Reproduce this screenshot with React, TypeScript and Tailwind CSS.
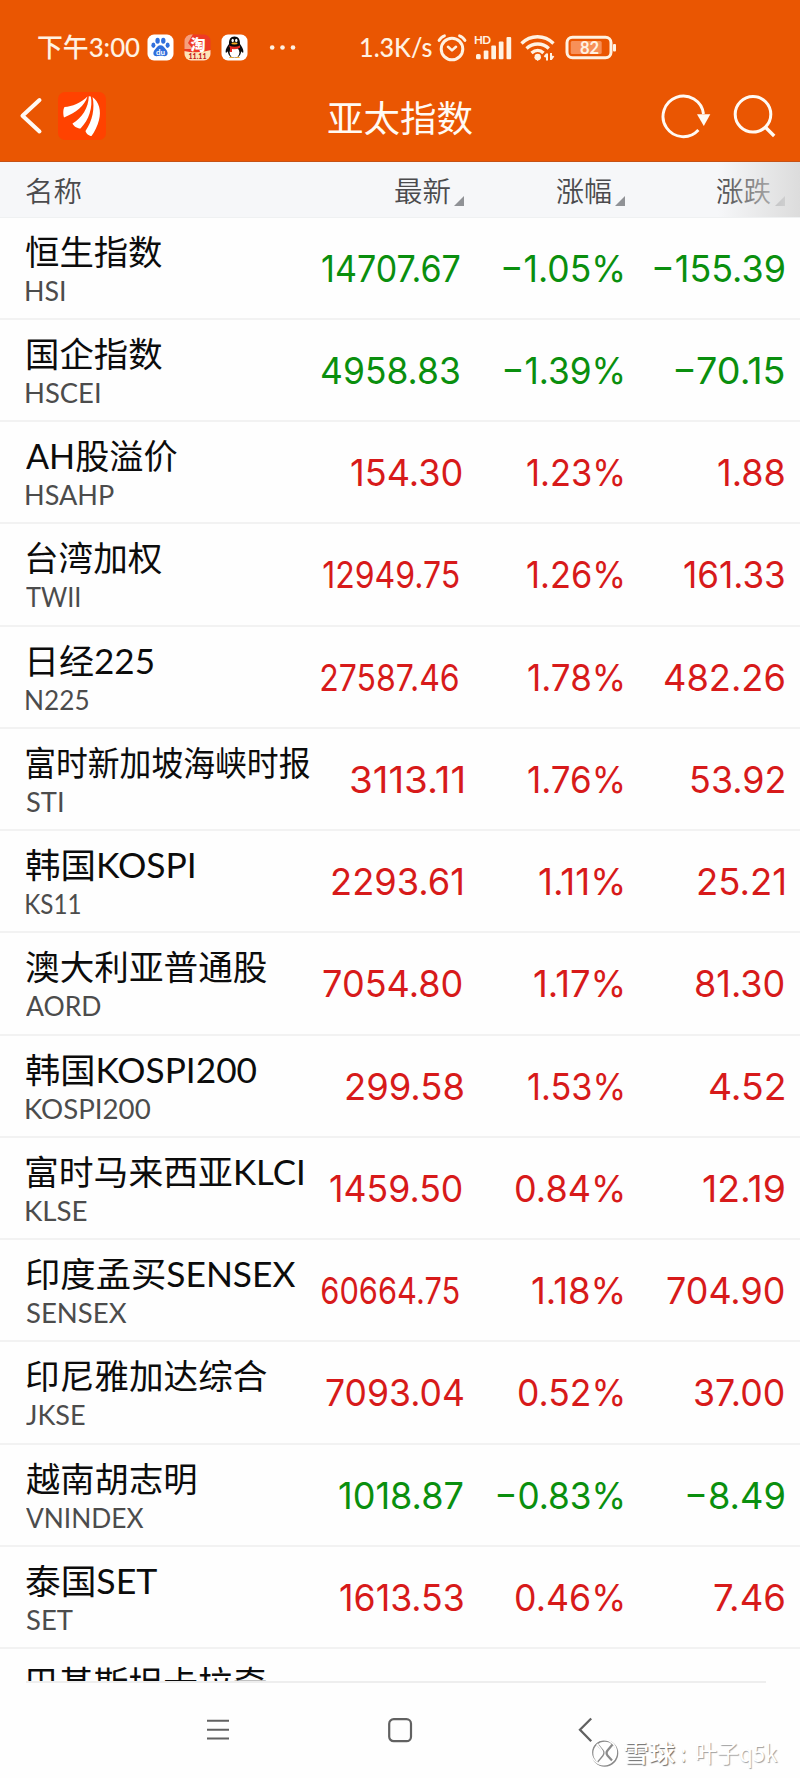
import { useLayoutEffect, useRef, useState } from "react";

/** Text condensed or widened so that its drawn width is exactly `width` pixels. */
function Fit({ text, width, className = "" }: { text: string; width: number; className?: string }) {
  const ref = useRef<HTMLSpanElement>(null);
  const [transform, setTransform] = useState("none");
  useLayoutEffect(() => {
    const el = ref.current;
    const ctx = document.createElement("canvas").getContext("2d");
    if (!el || !ctx) return;
    const cs = getComputedStyle(el);
    ctx.font = `${cs.fontWeight} ${cs.fontSize} ${cs.fontFamily}`;
    const m = ctx.measureText(text);
    const ink = m.actualBoundingBoxLeft + m.actualBoundingBoxRight;
    setTransform(`scaleX(${width / ink}) translateX(${m.actualBoundingBoxLeft}px)`);
  }, [text, width]);
  return (
    <div className={`shrink-0 whitespace-nowrap ${className}`} style={{ width }}>
      <span ref={ref} className="inline-block origin-left" style={{ transform }}>
        {text}
      </span>
    </div>
  );
}

type Cell = [text: string, width: number];
type Quote = { name: Cell; indent?: number; code: Cell; last: Cell; lastRight: number; pct: Cell; chg: Cell };

const quotes: Quote[] = [
  { name: ["恒生指数", 136], code: ["HSI", 39], last: ["14707.67", 138], lastRight: 460, pct: ["−1.05%", 120], chg: ["−155.39", 130] },
  { name: ["国企指数", 135], indent: 1, code: ["HSCEI", 74], last: ["4958.83", 137], lastRight: 458.5, pct: ["−1.39%", 119], chg: ["−70.15", 109] },
  { name: ["AH股溢价", 151], code: ["HSAHP", 88], last: ["154.30", 111], lastRight: 462, pct: ["1.23%", 96], chg: ["1.88", 66] },
  { name: ["台湾加权", 135], indent: 1, code: ["TWII", 54], last: ["12949.75", 136], lastRight: 459, pct: ["1.26%", 96], chg: ["161.33", 100] },
  { name: ["日经225", 123], indent: 4, code: ["N225", 62], last: ["27587.46", 137], lastRight: 458, pct: ["1.78%", 95], chg: ["482.26", 119] },
  { name: ["富时新加坡海峡时报", 284], code: ["STI", 37], last: ["3113.11", 112], lastRight: 463, pct: ["1.76%", 95], chg: ["53.92", 93] },
  { name: ["韩国KOSPI", 168], code: ["KS11", 54], last: ["2293.61", 130], lastRight: 462, pct: ["1.11%", 84], chg: ["25.21", 86] },
  { name: ["澳大利亚普通股", 241], code: ["AORD", 75], last: ["7054.80", 139], lastRight: 462, pct: ["1.17%", 89], chg: ["81.30", 88] },
  { name: ["韩国KOSPI200", 230], code: ["KOSPI200", 124], last: ["299.58", 117], lastRight: 463, pct: ["1.53%", 95], chg: ["4.52", 74] },
  { name: ["富时马来西亚KLCI", 277], code: ["KLSE", 61], last: ["1459.50", 132], lastRight: 462, pct: ["0.84%", 107], chg: ["12.19", 81] },
  { name: ["印度孟买SENSEX", 269], indent: 1, code: ["SENSEX", 101], last: ["60664.75", 137], lastRight: 459, pct: ["1.18%", 91], chg: ["704.90", 117] },
  { name: ["印尼雅加达综合", 240], indent: 1, code: ["JKSE", 59], last: ["7093.04", 137], lastRight: 463, pct: ["0.52%", 104], chg: ["37.00", 89] },
  { name: ["越南胡志明", 170], code: ["VNINDEX", 118], last: ["1018.87", 124], lastRight: 463, pct: ["−0.83%", 126], chg: ["−8.49", 97] },
  { name: ["泰国SET", 131], code: ["SET", 47], last: ["1613.53", 123], lastRight: 463, pct: ["0.46%", 107], chg: ["7.46", 70] },
];

const nameFont = "font-['Lato','Noto_Sans_CJK_SC',sans-serif]";
const numFont = "font-['Inter',sans-serif]";

function Row({ q }: { q: Quote }) {
  const color = q.pct[0].startsWith("−") ? "text-[#0a8f0e]" : "text-[#d71a1a]";
  return (
    <div className="relative h-[102.25px] shrink-0 border-b-2 border-[#f2f2f2]">
      <div className={`flex flex-col pl-[26px] ${nameFont}`}>
        <div style={{ paddingLeft: q.indent ?? 0 }}>
          <Fit text={q.name[0]} width={q.name[1]} className="mt-[10px] h-[48px] text-[34.5px] leading-[48px] text-[#0c0c0c]" />
        </div>
        <Fit text={q.code[0]} width={q.code[1]} className="h-[30px] text-[27px] leading-[30px] text-[#4c4c4c]" />
      </div>
      <div className={`absolute inset-0 grid grid-cols-[480px_143px_160.5px] items-center pt-[2px] text-[37px] leading-[44px] ${numFont} ${color}`}>
        <div className="flex justify-end" style={{ paddingRight: 480 - q.lastRight }}>
          <Fit text={q.last[0]} width={q.last[1]} />
        </div>
        <div className="flex justify-end">
          <Fit text={q.pct[0]} width={q.pct[1]} />
        </div>
        <div className="flex justify-end">
          <Fit text={q.chg[0]} width={q.chg[1]} />
        </div>
      </div>
    </div>
  );
}

function StatusBar() {
  return (
    <div className="flex h-[80px] items-start pt-[34px] pl-[38px] font-['Lato','Noto_Sans_CJK_SC',sans-serif] text-[#fff2e2]">
      <Fit text="下午3:00" width={102} className="h-[27px] text-[26px] leading-[27px] font-medium" />
      <svg className="ml-[7px] shrink-0" width="27" height="27" viewBox="0 0 27 27">
        <rect x=".5" y=".5" width="26" height="26" rx="6.5" fill="#fff" />
        <g fill="#2f6fdc">
          <ellipse cx="10.6" cy="6.8" rx="2.2" ry="3" />
          <ellipse cx="16.3" cy="6.8" rx="2.2" ry="3" />
          <ellipse cx="6.4" cy="11.2" rx="2" ry="2.7" />
          <ellipse cx="20.6" cy="11.2" rx="2" ry="2.7" />
          <path d="M13.5 11.2c2.6 0 3.6 2.2 5.3 4 2.6 2.6 2.6 6.8-1.4 7-1.6 0-2.5-.4-3.9-.4s-2.3.4-3.9.4c-4-.2-4-4.4-1.4-7 1.7-1.8 2.7-4 5.3-4z" />
        </g>
        <text x="13.5" y="21" textAnchor="middle" fontSize="8" fontWeight="700" fontFamily="Lato" fill="#fff">du</text>
      </svg>
      <svg className="ml-[10px] shrink-0" width="27" height="27" viewBox="0 0 27 27">
        <clipPath id="tb"><rect x=".5" y=".5" width="26" height="26" rx="6.5" /></clipPath>
        <g clipPath="url(#tb)">
          <rect width="27" height="27" fill="#ee3b25" />
          <path d="M0 0h9L4 9l5 6H0z" fill="#f6a07c" />
          <path d="M0 17q13 3 27-1v11H0z" fill="#fde5b8" />
        </g>
        <text x="14" y="15.5" textAnchor="middle" fontSize="15" fontWeight="900" fontFamily="Noto Sans CJK SC" fill="#fff">淘</text>
        <text x="13.5" y="24.500" textAnchor="middle" fontSize="7" fontWeight="900" fontFamily="Lato" fill="#c3161c">11.11</text>
      </svg>
      <svg className="ml-[10px] shrink-0" width="27" height="27" viewBox="0 0 27 27">
        <rect x=".5" y=".5" width="26" height="26" rx="6.5" fill="#fff" />
        <path d="M13.5 2.5c-4 0-5.700 3-5.500 7.500-1.500 2-3.600 5-3.400 8 .3 1.500 1.500.3 2.200-.8.500 4.400 3.200 6.800 6.700 6.800s6.200-2.400 6.700-6.800c.7 1.100 1.900 2.300 2.200.8.200-3-1.900-6-3.400-8 .2-4.500-1.500-7.500-5.500-7.500z" fill="#0b0b0b" />
        <ellipse cx="13.5" cy="18.5" rx="4.9" ry="5.2" fill="#fff" />
        <ellipse cx="11.7" cy="6.5" rx="1.2" ry="1.7" fill="#fff" />
        <ellipse cx="15.3" cy="6.5" rx="1.2" ry="1.7" fill="#fff" />
        <ellipse cx="13.5" cy="9.5" rx="3.2" ry="1" fill="#f6a81c" />
        <path d="M8 11.5q5.500 2.600 11 0v2.200q-4 2-8 1.400v3H9v-4z" fill="#e52a22" />
        <path d="M8 23.5q2.500-1.500 5 .6h-5zM14 24.100q2.500-2.100 5-.6v.6z" fill="#f6a81c" />
      </svg>
      <svg className="ml-[20px] shrink-0" width="28" height="27" viewBox="0 0 28 27" fill="currentColor">
        <circle cx="4.2" cy="13.5" r="2.3" /><circle cx="14.5" cy="13.5" r="2.3" /><circle cx="25" cy="13.5" r="2.3" />
      </svg>
      <Fit text="1.3K/s" width={71} className="ml-[65px] h-[27px] text-[26px] leading-[27px] font-medium" />
      <svg className="ml-[5px] shrink-0" width="30" height="28" viewBox="0 0 30 28" fill="none" stroke="currentColor" strokeWidth="3" strokeLinecap="round" strokeLinejoin="round">
        <circle cx="15" cy="15" r="10.8" />
        <path d="M2 6.5q2-3.700 5.500-4.700M28 6.500q-2-3.700-5.500-4.700" strokeWidth="2.800" />
        <path d="M11 12.800l4 3.600 4-3.600" strokeWidth="2.600" />
      </svg>
      <svg className="ml-[7px] shrink-0" width="40" height="27" viewBox="0 0 40 27">
        <text x="0" y="10" fontSize="11.5" fontFamily="Lato" fontWeight="700" fill="currentColor" textLength="17">HD</text>
        <g fill="currentColor">
          <rect x="2" y="20" width="4.700" height="5.300" rx="1.500" />
          <rect x="9.700" y="16.500" width="4.700" height="8.800" rx="1" />
          <rect x="17.300" y="11.500" width="4.700" height="13.800" rx="1" />
          <rect x="24.800" y="7.500" width="4.700" height="17.800" rx="1" />
          <rect x="32.500" y="3" width="4.700" height="22.300" rx="1" />
        </g>
      </svg>
      <svg className="ml-[6px] shrink-0" width="36" height="28" viewBox="0 0 36 28" fill="none" stroke="currentColor" strokeWidth="3.300">
        <path d="M1.500 9.500c9-9 23-9 32 0M6.500 14.500c6.500-6 16-6 22.300 0M11.500 19c4-3.500 8.500-3.500 12 0" />
        <path d="M14.200 23.500q3.500-2.500 7 0l-3.500 3.500z" fill="currentColor" stroke="none" />
        <circle cx="17.700" cy="23" r="3.200" fill="currentColor" stroke="none" />
        <path d="M27 26.500v-7M27 20l-2.500 3M31 19v7M31 25.500l2.500-3.500" strokeWidth="2" />
      </svg>
      <svg className="ml-[9px] shrink-0" width="53" height="27" viewBox="0 0 53 27">
        <rect x="2" y="3.300" width="44" height="20.500" rx="5.500" fill="none" stroke="currentColor" strokeWidth="3" />
        <rect x="5.700" y="7" width="31" height="13" rx="1.500" fill="#f79058" />
        <rect x="48" y="10" width="3" height="7.500" rx="1" fill="currentColor" />
        <text x="24.500" y="19.500" textAnchor="middle" fontSize="16.500" fontWeight="700" fontFamily="Lato" fill="currentColor">82</text>
      </svg>
    </div>
  );
}

function TitleBar() {
  return (
    <div className="flex h-[82px] items-start">
      <svg className="mt-[16px] ml-[18px] shrink-0" width="28" height="40" viewBox="0 0 28 40" fill="none" stroke="#fffaf4" strokeWidth="4" strokeLinecap="round" strokeLinejoin="round">
        <path d="M21.500 4L4.500 19.800l17 15.700" />
      </svg>
      <svg className="mt-[12px] ml-[12px] shrink-0" width="48" height="48" viewBox="0 0 48 48">
        <rect width="48" height="48" rx="7" fill="#ff4200" />
        <g fill="#fff">
          <path d="M6 25.500C5 22 5 17 6.500 15 14 14.500 23 11 29.500 4.500 26.500 14 18 20.500 6 25.500z" />
          <path d="M14.500 31.500C24 26 30.500 16 30.800 4.300l2 .2C35 15 31 28 22.500 36.500 19 36.500 15.500 34 14.500 31.500z" />
          <path d="M27.500 39C34.500 29 37 16 34.500 5 41 9.500 43.500 19 41 28 39.500 34 36.500 40 33.500 44 31 44 28 41.500 27.500 39z" />
        </g>
      </svg>
      <Fit text="亚太指数" width={144} className="mt-[12px] ml-[222px] h-[48px] font-['Noto_Sans_CJK_SC',sans-serif] text-[36px] leading-[48px] text-[#fffaf4]" />
      <svg className="mt-[12px] ml-[188px] shrink-0" width="52" height="48" viewBox="0 0 52 48" fill="none" stroke="#fffaf4" strokeWidth="2.900">
        <path d="M38.400 38A20.300 20.300 0 1 1 43.500 22" />
        <path d="M37 22.200h13.300l-6.500 11.800z" fill="#fffaf4" stroke="none" />
      </svg>
      <svg className="mt-[12px] ml-[20px] shrink-0" width="46" height="48" viewBox="0 0 46 48" fill="none" stroke="#fffaf4" strokeWidth="3">
        <circle cx="21" cy="22.300" r="17.800" />
        <path d="M33.200 35l9 9" strokeWidth="3.400" />
      </svg>
    </div>
  );
}

function SortLabel({ text, className = "" }: { text: string; className?: string }) {
  return (
    <div className={`flex ${className}`}>
      <Fit text={text} width={55} className="h-[40px] leading-[40px]" />
      <svg className="mt-[26px] ml-[4px] shrink-0" width="10" height="10" viewBox="0 0 10 10">
        <path d="M10 0v10H0z" fill="#909296" />
      </svg>
    </div>
  );
}

export default function App() {
  return (
    <div className="flex h-[1778px] w-[800px] flex-col overflow-hidden bg-[#fefefe]">
      <header className="h-[162px] shrink-0 border-b border-[#c65216] bg-[#ea5602]">
        <StatusBar />
        <TitleBar />
      </header>
      <div className="relative flex h-[55.5px] shrink-0 border-b border-[#eff1f2] bg-[#f6f7f9] pt-[7.5px] font-['Noto_Sans_CJK_SC',sans-serif] text-[28px] font-[350] text-[#4b4b4d]">
        <Fit text="名称" width={55} className="ml-[26px] h-[40px] leading-[40px]" />
        <SortLabel text="最新" className="ml-[314px]" />
        <SortLabel text="涨幅" className="ml-[91.5px]" />
        <SortLabel text="涨跌" className="ml-[91.5px]" />
        <div className="absolute inset-y-0 right-0 w-[82px] bg-gradient-to-r from-[#dcdcdc]/0 to-[#dcdcdc]" />
      </div>
      <main className="flex h-[1464.5px] shrink-0 flex-col overflow-hidden">
        {quotes.map((q) => (
          <Row key={q.code[0]} q={q} />
        ))}
        <Fit text="巴基斯坦卡拉奇" width={238} className={`mt-[10px] ml-[28px] h-[48px] text-[34.5px] leading-[48px] text-[#0c0c0c] ${nameFont}`} />
      </main>
      <nav className="relative flex h-[96px] shrink-0 items-start">
        <div className="absolute top-[-1px] left-[26px] h-[2px] w-[740px] bg-[#eeeeee]" />
        <svg className="mt-[36px] ml-[206px] shrink-0" width="24" height="24" viewBox="0 0 24 24" stroke="#616161" strokeWidth="2">
          <path d="M1 2.700h22M1 11.700h22M1 20.500h22" />
        </svg>
        <svg className="mt-[35px] ml-[157px] shrink-0" width="26" height="26" viewBox="0 0 26 26" fill="none" stroke="#616161" strokeWidth="2.200">
          <rect x="2.200" y="2.200" width="21.800" height="22" rx="4.500" />
        </svg>
        <svg className="mt-[35px] ml-[164px] shrink-0" width="18" height="26" viewBox="0 0 18 26" fill="none" stroke="#616161" strokeWidth="2.300">
          <path d="M14.200 1.500L3 12.800l11.200 11.500" />
        </svg>
        <div className="absolute top-[54px] left-[590px] flex h-[32px] items-center font-['Noto_Sans_CJK_SC',sans-serif] text-[24px] leading-[32px] text-white [text-shadow:1px_1px_1px_#6a6a6a]">
          <svg width="29" height="29" viewBox="0 0 29 29" fill="none">
            <circle cx="14.800" cy="15.200" r="12.500" stroke="#8a8a8a" strokeWidth="2" />
            <circle cx="13.800" cy="14.200" r="12.500" stroke="#fff" strokeWidth="1.600" />
            <path d="M8 7l4.500 5.500q2 2.500 0 5l-5 6M22.500 6.500l-5 6q-2 2.500 0 5l4.500 5" stroke="#8a8a8a" strokeWidth="2.200" />
            <path d="M7 6l4.500 6q2 2.500 0 5l-5 6" stroke="#fff" strokeWidth="1.600" />
          </svg>
          <Fit text="雪球" width={51} className="ml-[5px] font-medium" />
          <Fit text=":" width={3} className="ml-[7px] font-medium" />
          <Fit text="叶子q5k" width={81} className="ml-[11px] [text-shadow:1px_1px_1px_#a0a0a0]" />
        </div>
      </nav>
    </div>
  );
}
